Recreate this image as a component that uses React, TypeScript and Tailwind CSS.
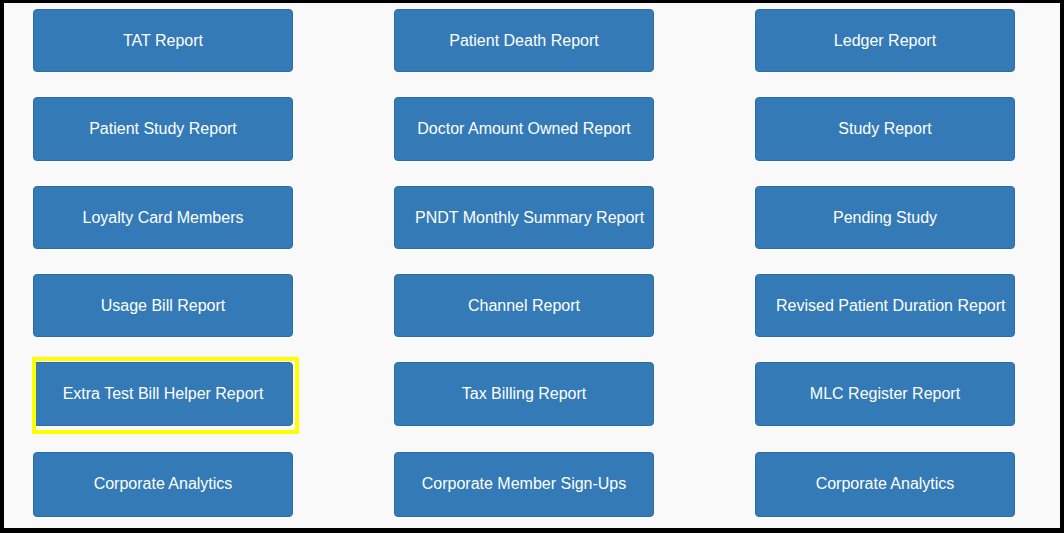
import React from 'react';

type Row = {
  labels: [string, string, string];
  height: string;
  gap: string;
  textOffset?: string;
};

const rows: Row[] = [
  { labels: ['TAT Report', 'Patient Death Report', 'Ledger Report'], height: 'h-[63px]', gap: 'mt-[6px]' },
  { labels: ['Patient Study Report', 'Doctor Amount Owned Report', 'Study Report'], height: 'h-[64px]', gap: 'mt-[25px]' },
  { labels: ['Loyalty Card Members', 'PNDT Monthly Summary Report', 'Pending Study'], height: 'h-[63px]', gap: 'mt-[25px]' },
  { labels: ['Usage Bill Report', 'Channel Report', 'Revised Patient Duration Report'], height: 'h-[63px]', gap: 'mt-[25px]' },
  { labels: ['Extra Test Bill Helper Report', 'Tax Billing Report', 'MLC Register Report'], height: 'h-[64px]', gap: 'mt-[25px]' },
  { labels: ['Corporate Analytics', 'Corporate Member Sign-Ups', 'Corporate Analytics'], height: 'h-[65px]', gap: 'mt-[26px]', textOffset: 'pb-[2px]' },
];

function ReportButton({
  label,
  height,
  textOffset,
  highlighted,
}: {
  label: string;
  height: string;
  textOffset?: string;
  highlighted?: boolean;
}) {
  return (
    <div className={`relative w-[260px] ${height}`}>
      <button
        type="button"
        className={`flex h-full w-full items-center justify-center whitespace-nowrap rounded-[4px] border border-[#2e6da4] bg-[#337ab7] px-5 text-[16px] text-white ${textOffset ?? ''}`}
      >
        <span className="block w-full text-center">{label}</span>
      </button>
      {/* Highlight marker drawn over the selected report */}
      {highlighted && (
        <div className="pointer-events-none absolute -left-px -top-[5px] h-[77px] w-[267px] border-4 border-[#ffff00]" />
      )}
    </div>
  );
}

export default function App() {
  return (
    <div className="h-[533px] w-[1064px] bg-black pb-[5px] pl-[4px] pr-[4px] pt-[3px]">
      <div
        className="h-full w-full overflow-hidden bg-[#f9f9f9]"
        style={{ fontFamily: '"Liberation Sans", Arial, sans-serif' }}
      >
        <div className="flex flex-col pl-[29px]">
          {rows.map((row, i) => (
            <div key={i} className={`flex gap-[101px] ${row.gap}`}>
              {row.labels.map((label, j) => (
                <ReportButton
                  key={j}
                  label={label}
                  height={row.height}
                  textOffset={row.textOffset}
                  highlighted={i === 4 && j === 0}
                />
              ))}
            </div>
          ))}
        </div>
      </div>
    </div>
  );
}
